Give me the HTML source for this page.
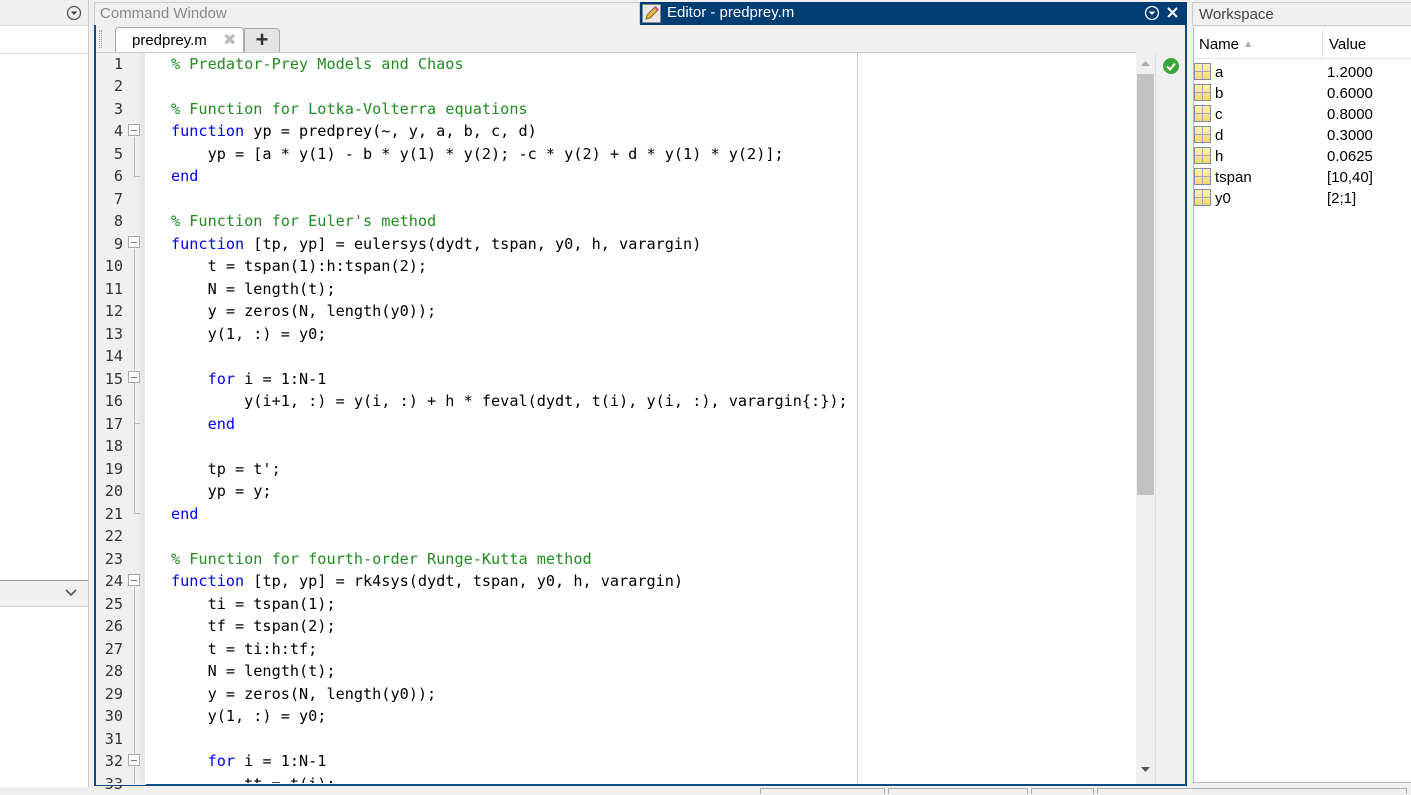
<!DOCTYPE html>
<html><head><meta charset="utf-8"><style>
*{margin:0;padding:0;box-sizing:border-box}
body{width:1411px;height:793px;background:#f0f0f0;position:relative;overflow:hidden;font-family:"Liberation Sans","DejaVu Sans",sans-serif}
.abs{position:absolute}
.code{font-family:"DejaVu Sans Mono","Liberation Mono",monospace;font-size:15.2px;line-height:22.48px;white-space:pre;color:#000}
.c{color:#228b22}.k{color:#0000ff}
.ln{font-family:"DejaVu Sans Mono","Liberation Mono",monospace;font-size:15.2px;line-height:22.48px;text-align:right;color:#333;white-space:pre}
.fb{position:absolute;width:12px;height:12px;border:1px solid #aaa;background:#fff;left:128px}
.fb:after{content:"";position:absolute;left:2px;top:5px;width:6px;height:1px;background:#777}
.ws{font-size:15px;line-height:21px;color:#000}
.ico{display:inline-block;width:17px;height:17px;border:1px solid #7a8ea8;background:linear-gradient(#fff3a8,#f3d96a);vertical-align:-3px;margin-right:4px;position:relative}
.ico:before{content:"";position:absolute;left:7px;top:0;width:1px;height:15px;background:#9aa9bd}
.ico:after{content:"";position:absolute;top:7px;left:0;height:1px;width:15px;background:#9aa9bd}
</style></head><body>
<div class="abs" style="left:0;top:0;width:89px;height:787px;background:#fff;border-right:1px solid #ccc"></div>
<div class="abs" style="left:0;top:0;width:88px;height:26px;background:#f0f0f0;border-bottom:1px solid #ddd"></div>
<svg class="abs" style="left:66px;top:5px" width="16" height="16"><circle cx="8" cy="8" r="6.5" fill="none" stroke="#555" stroke-width="1.3"/><path d="M4.8 6.5h6.4L8 10z" fill="#444"/></svg>
<div class="abs" style="left:0;top:53px;width:88px;height:1px;background:#ddd"></div>
<div class="abs" style="left:0;top:580px;width:88px;height:1px;background:#999"></div>
<div class="abs" style="left:0;top:581px;width:88px;height:26px;background:#f0f0f0;border-bottom:1px solid #ccc"></div>
<svg class="abs" style="left:64px;top:587px" width="14" height="12"><path d="M2 3l5 5 5-5" fill="none" stroke="#555" stroke-width="1.6"/></svg>
<div class="abs" style="left:94px;top:2px;width:546px;height:22px;background:#f0f0f0;border:1px solid #ccc;border-bottom:none;font-size:15px;color:#888;padding:2px 0 0 5px">Command Window</div>
<div class="abs" style="left:640px;top:2px;width:547px;height:23px;background:#003d73"></div>
<svg class="abs" style="left:642px;top:4px" width="19" height="19"><rect x="0.5" y="0.5" width="18" height="18" fill="#e8e8e8" stroke="#888"/><path d="M4 15l1-4 8-8 3 3-8 8z" fill="#e8b84a" stroke="#8a6520"/><path d="M13 3l3 3" stroke="#d04a8a" stroke-width="2"/></svg>
<div class="abs" style="left:667px;top:4px;font-size:15px;color:#fff">Editor - predprey.m</div>
<svg class="abs" style="left:1144px;top:5px" width="16" height="16"><circle cx="8" cy="8" r="6.5" fill="none" stroke="#fff" stroke-width="1.3"/><path d="M4.8 6.5h6.4L8 10z" fill="#fff"/></svg>
<svg class="abs" style="left:1166px;top:6px" width="13" height="13"><path d="M2 2l9 9M11 2l-9 9" stroke="#fff" stroke-width="2"/></svg>
<div class="abs" style="left:94px;top:25px;width:1093px;height:761px;border:2px solid #0d4a85;border-top:none;background:#f0f0f0"></div>
<div class="abs" style="left:99px;top:30px;width:3px;height:18px;border-left:1px dotted #999;border-right:1px dotted #999"></div>
<div class="abs" style="left:115px;top:27px;width:129px;height:27px;background:#fff;border:1px solid #aaa;border-bottom:none;border-radius:4px 4px 0 0;font-size:15px;padding:4px 0 0 16px">predprey.m<span style="color:#bbb;position:absolute;left:107px;top:2px;font-size:16px">✖</span></div>
<div class="abs" style="left:244px;top:28px;width:36px;height:24px;background:#e4e4e4;border:1px solid #aaa;border-bottom:none;border-radius:0 4px 0 0;font-size:22px;font-weight:bold;line-height:22px;text-align:center;color:#333">+</div>
<div class="abs" style="left:96px;top:52px;width:1040px;height:732px;background:#fff;border-top:1px solid #ccc"></div>
<div class="abs" style="left:96px;top:53px;width:49px;height:731px;background:linear-gradient(90deg,#f0f0f0 85%,#e2e2e2)"></div>
<div class="abs" style="left:857px;top:53px;width:1px;height:731px;background:#ccc"></div>
<div class="abs" style="left:1136px;top:53px;width:19px;height:731px;background:#f0f0f0"></div>
<div class="abs" style="left:1137px;top:74px;width:17px;height:421px;background:#c2c2c2"></div>
<svg class="abs" style="left:1140px;top:59px" width="11" height="8"><path d="M1 7h9L5.5 2z" fill="#aaa"/></svg>
<svg class="abs" style="left:1140px;top:766px" width="11" height="8"><path d="M1 1h9L5.5 6z" fill="#555"/></svg>
<div class="abs" style="left:1155px;top:53px;width:30px;height:731px;background:#f0f0f0;border-left:1px solid #ddd"></div>
<svg class="abs" style="left:1162px;top:57px" width="18" height="18"><circle cx="9" cy="9" r="8" fill="#3aa53a"/><path d="M5 9.5l3 3 5-6" fill="none" stroke="#fff" stroke-width="2"/></svg>
<div class="abs ln" style="left:96px;top:53px;width:27px">1
2
3
4
5
6
7
8
9
10
11
12
13
14
15
16
17
18
19
20
21
22
23
24
25
26
27
28
29
30
31
32
33</div>
<div class="abs" style="left:96px;top:783px;width:50px;height:2px;background:#f0f0f0"></div>
<div class="abs" style="left:134px;top:137px;width:1px;height:40px;background:#bbb"></div><div class="abs" style="left:134px;top:176px;width:6px;height:1px;background:#bbb"></div>
<div class="abs" style="left:134px;top:249px;width:1px;height:264px;background:#bbb"></div><div class="abs" style="left:134px;top:513px;width:6px;height:1px;background:#bbb"></div>
<div class="abs" style="left:134px;top:423px;width:6px;height:1px;background:#bbb"></div>
<div class="abs" style="left:134px;top:587px;width:1px;height:197px;background:#bbb"></div>
<div class="fb" style="top:124px"></div>
<div class="fb" style="top:236px"></div>
<div class="fb" style="top:371px"></div>
<div class="fb" style="top:574px"></div>
<div class="fb" style="top:754px"></div>
<div class="abs code" style="left:171px;top:53px;height:730px;overflow:hidden"><span class="c">% Predator-Prey Models and Chaos</span>

<span class="c">% Function for Lotka-Volterra equations</span>
<span class="k">function</span> yp = predprey(~, y, a, b, c, d)
    yp = [a * y(1) - b * y(1) * y(2); -c * y(2) + d * y(1) * y(2)];
<span class="k">end</span>

<span class="c">% Function for Euler's method</span>
<span class="k">function</span> [tp, yp] = eulersys(dydt, tspan, y0, h, varargin)
    t = tspan(1):h:tspan(2);
    N = length(t);
    y = zeros(N, length(y0));
    y(1, :) = y0;

    <span class="k">for</span> i = 1:N-1
        y(i+1, :) = y(i, :) + h * feval(dydt, t(i), y(i, :), varargin{:});
    <span class="k">end</span>

    tp = t';
    yp = y;
<span class="k">end</span>

<span class="c">% Function for fourth-order Runge-Kutta method</span>
<span class="k">function</span> [tp, yp] = rk4sys(dydt, tspan, y0, h, varargin)
    ti = tspan(1);
    tf = tspan(2);
    t = ti:h:tf;
    N = length(t);
    y = zeros(N, length(y0));
    y(1, :) = y0;

    <span class="k">for</span> i = 1:N-1
        tt = t(i);</div>
<div class="abs" style="left:1192px;top:2px;width:219px;height:24px;background:#f0f0f0;border:1px solid #ccc;border-right:none;font-size:15px;color:#444;padding:3px 0 0 6px">Workspace</div>
<div class="abs" style="left:1193px;top:27px;width:218px;height:756px;background:#fff;border-left:1px solid #bbb;border-bottom:1px solid #bbb"></div>
<div class="abs" style="left:1194px;top:29px;width:217px;height:30px;background:#fff;border-bottom:1px solid #e4e4e4"></div>
<div class="abs" style="left:1322px;top:29px;width:1px;height:30px;background:#e4e4e4"></div>
<div class="abs" style="left:1199px;top:36px;font-size:15px">Name <span style="color:#aaa;font-size:10px;vertical-align:2px">▲</span></div>
<div class="abs" style="left:1329px;top:36px;font-size:15px">Value</div>
<div class="abs ws" style="left:1194px;top:62px"><span class="ico"></span>a<br><span class="ico"></span>b<br><span class="ico"></span>c<br><span class="ico"></span>d<br><span class="ico"></span>h<br><span class="ico"></span>tspan<br><span class="ico"></span>y0</div>
<div class="abs ws" style="left:1327px;top:62px">1.2000<br>0.6000<br>0.8000<br>0.3000<br>0.0625<br>[10,40]<br>[2;1]</div>
<div class="abs" style="left:760px;top:788px;width:125px;height:6px;border:1px solid #aaa;border-bottom:none"></div>
<div class="abs" style="left:888px;top:788px;width:140px;height:6px;border:1px solid #aaa;border-bottom:none"></div>
<div class="abs" style="left:1031px;top:788px;width:63px;height:6px;border:1px solid #aaa;border-bottom:none"></div>
<div class="abs" style="left:1097px;top:788px;width:310px;height:6px;border:1px solid #aaa;border-bottom:none"></div>
</body></html>
